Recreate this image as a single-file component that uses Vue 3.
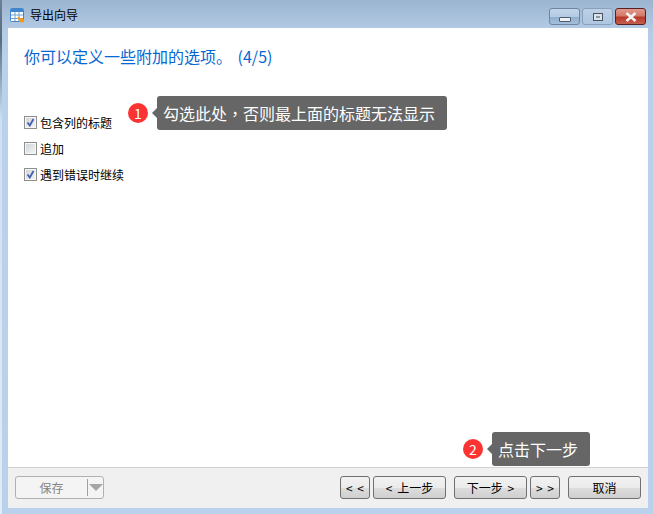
<template>
  <div class="window">
    <div class="titlebar">
      <svg class="app-icon" width="16" height="16" viewBox="0 0 16 16">
        <rect x="0.5" y="0.5" width="13" height="13" rx="1" fill="#fff" stroke="#3f86cc" />
        <rect x="1" y="1" width="12" height="3" fill="#3f86cc" />
        <path d="M1 7h12M1 10.500h12M5 4v9M9 4v9" stroke="#6ea3d8" stroke-width="1" />
        <path d="M7.500 9.500l1.500-1 2 2.200 1.500-1 2 3.300-1.500 1.500-3.500-.5z" fill="#f29a1f" />
      </svg>
      <span class="title">导出向导</span>
      <div class="caption-buttons">
        <div class="cap cap-min"><span class="min-glyph"></span></div>
        <div class="cap cap-max"><span class="max-glyph"></span></div>
        <div class="cap cap-close">
          <svg width="14" height="10" viewBox="0 0 14 10">
            <path d="M2.500 1L11.500 9M11.500 1L2.500 9" stroke="#f4f4f4" stroke-width="2.600" />
          </svg>
        </div>
      </div>
    </div>

    <div class="content">
      <h1 class="heading">你可以定义一些附加的选项。 (4/5)</h1>
      <div class="options">
        <label v-for="opt in options" :key="opt.label" class="option">
          <span class="box">
            <svg v-if="opt.checked" width="9" height="9" viewBox="0 0 9 9">
              <path d="M1.500 4.500L3.800 7.500L7.500 1" fill="none" stroke="#4460ac" stroke-width="1.800" />
            </svg>
          </span>
          <span>{{ opt.label }}</span>
        </label>
      </div>
    </div>

    <div class="footer">
      <div class="save-btn">
        <span class="save-label">保存</span>
        <span class="save-sep"></span>
        <span class="save-arrow"></span>
      </div>
      <div class="nav">
        <button class="btn btn-small">&lt; &lt;</button>
        <button class="btn btn-wide">&lt; 上一步</button>
        <button class="btn btn-wide btn-next">下一步 &gt;</button>
        <button class="btn btn-small">&gt; &gt;</button>
        <button class="btn btn-wide btn-cancel">取消</button>
      </div>
    </div>

    <div class="badge badge-one">1</div>
    <div class="tip tip-one">勾选此处<span class="comma">，</span>否则最上面的标题无法显示</div>
    <div class="badge badge-two">2</div>
    <div class="tip tip-two">点击下一步</div>
  </div>
</template>

<script setup>
const options = [
  { label: '包含列的标题', checked: true },
  { label: '追加', checked: false },
  { label: '遇到错误时继续', checked: true }
]
</script>

<style>
html, body {
  margin: 0;
  background: #b9d1ea;
}
</style>

<style scoped>
.window {
  position: relative;
  width: 653px;
  height: 514px;
  box-sizing: border-box;
  padding: 0 5px 6px 6px;
  border-left: 2px solid;
  border-image: linear-gradient(#6d7f94, #5a6b7e 40px, #cfe0f0 120px, #e2ecf6) 1;
  display: flex;
  flex-direction: column;
  overflow: hidden;
  background: linear-gradient(#9bb4cf, #b3cbe5 30px, #b9d1ea 60px);
  font-family: "Noto Sans CJK SC", sans-serif;
  font-size: 12px;
  color: #000;
}

.titlebar {
  height: 28px;
  flex: none;
  display: flex;
  align-items: center;
  position: relative;
  margin-left: -8px;
  padding-left: 10px;
}

.app-icon {
  margin-top: 3px;
}

.title {
  margin-left: 4px;
  margin-top: 1px;
  font-size: 12px;
  color: #000;
}

.caption-buttons {
  position: absolute;
  right: 2px;
  top: 8px;
  display: flex;
  gap: 2px;
}

.cap {
  height: 17px;
  box-sizing: border-box;
  border: 1px solid #6f86a3;
  border-radius: 3px;
  display: flex;
  align-items: center;
  justify-content: center;
  background: linear-gradient(#c3d5e9, #b4cbe4 50%, #8fadcf 52%, #a4bfdb);
}

.cap-min {
  width: 31px;
}

.cap-max {
  width: 31px;
  border-color: #8aa1bd;
  background: linear-gradient(#bdd0e6, #aec6e0);
}

.cap-close {
  width: 31px;
  border-color: #5a1f24;
  background: linear-gradient(#df9a8e, #d47a6a 45%, #b8382a 55%, #c4604e);
}

.min-glyph {
  width: 10px;
  height: 3px;
  margin-top: 5px;
  background: #eef1f5;
  border: 1px solid #4d5a6c;
  border-radius: 1px;
}

.max-glyph {
  width: 8px;
  height: 6px;
  background: #dde3ea;
  border: 1px solid #46525f;
  position: relative;
}

.max-glyph::after {
  content: '';
  position: absolute;
  left: 2px;
  top: 2px;
  width: 4px;
  height: 2px;
  background: #8c98a6;
}

.content {
  flex: 1;
  background: #fff;
  padding: 17px 16px 0;
  min-height: 0;
}

.heading {
  margin: 0;
  font-size: 16px;
  line-height: 22px;
  font-weight: 400;
  color: #0668d2;
  word-spacing: 2px;
}

.options {
  margin-top: 46px;
  display: flex;
  flex-direction: column;
  gap: 8px;
}

.option {
  display: flex;
  align-items: center;
  gap: 3px;
  height: 18px;
  font-size: 12px;
}

.box {
  width: 13px;
  height: 13px;
  box-sizing: border-box;
  border: 1px solid #8e8f8f;
  background: linear-gradient(135deg, #cfd2d6, #f6f6f6);
  box-shadow: inset 0 0 0 1px #f7f7f7;
  display: flex;
  align-items: center;
  justify-content: center;
}

.footer {
  height: 41px;
  flex: none;
  box-sizing: border-box;
  border-top: 1px solid #d3d3d3;
  background: #f0f0f0;
  display: flex;
  align-items: flex-start;
  justify-content: space-between;
  padding: 8px 7px 0;
}

.save-btn {
  width: 89px;
  height: 23px;
  box-sizing: border-box;
  border: 1px solid #adb2b5;
  border-radius: 3px;
  background: #f4f4f4;
  display: flex;
  align-items: center;
}

.save-label {
  width: 71px;
  text-align: center;
  color: #838383;
}

.save-sep {
  width: 1px;
  height: 17px;
  background: #a0a0a0;
}

.save-arrow {
  margin-left: 1px;
  width: 0;
  height: 0;
  border-left: 7px solid transparent;
  border-right: 7px solid transparent;
  border-top: 7px solid #a5a5a5;
}

.nav {
  display: flex;
  gap: 3px;
}

.btn {
  height: 23px;
  padding: 0;
  box-sizing: border-box;
  border: 1px solid #707070;
  border-radius: 3px;
  background: linear-gradient(#f2f2f2, #ebebeb 50%, #dddddd 52%, #cfcfcf);
  font-family: inherit;
  font-size: 12px;
  color: #000;
  line-height: 20px;
  word-spacing: 2px;
}

.btn-small {
  width: 30px;
}

.btn-wide {
  width: 73px;
}

.btn-next,
.btn-cancel {
  margin-left: 5px;
}

.badge {
  position: absolute;
  width: 20px;
  height: 20px;
  border-radius: 50%;
  background: #fb3333;
  color: #fff;
  font-size: 14px;
  line-height: 20px;
  text-align: center;
}

.badge-one {
  left: 126px;
  top: 103px;
}

.badge-two {
  left: 461px;
  top: 439px;
}

.tip {
  position: absolute;
  box-sizing: border-box;
  height: 34px;
  padding: 0 6px;
  border-radius: 3px;
  background: #666;
  color: #fff;
  font-size: 16px;
  line-height: 34px;
  white-space: nowrap;
}

.comma {
  font-family: "Noto Sans CJK TC", sans-serif;
}

.tip::before {
  content: '';
  position: absolute;
  left: -5px;
  top: 12px;
  border-top: 5px solid transparent;
  border-bottom: 5px solid transparent;
  border-right: 5px solid #666;
}

.tip-one {
  left: 155px;
  top: 96px;
  width: 290px;
}

.tip-two {
  left: 490px;
  top: 432px;
  width: 98px;
}
</style>
